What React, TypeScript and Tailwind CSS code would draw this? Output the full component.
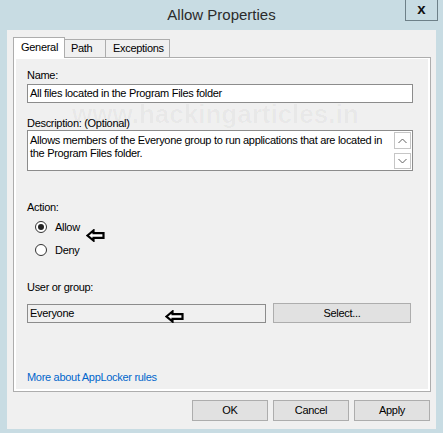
import React from "react";

const font = { fontFamily: '"Liberation Sans", Arial, sans-serif' };

function LeftArrow() {
  return (
    <svg width="19" height="13" viewBox="0 0 19 13">
      <polygon
        points="1.5,6.5 7.5,1.5 7.5,4.2 17.5,4.2 17.5,8.8 7.5,8.8 7.5,11.5"
        fill="#ffffff"
        stroke="#000000"
        strokeWidth="2.2"
        strokeLinejoin="miter"
      />
    </svg>
  );
}

function Chevron({ up }: { up?: boolean }) {
  return (
    <svg width="9" height="6" viewBox="0 0 9 6">
      <polyline
        points={up ? "0.5,5 4.5,1 8.5,5" : "0.5,1 4.5,5 8.5,1"}
        fill="none"
        stroke="#606060"
        strokeWidth="1"
      />
    </svg>
  );
}

function Radio({ checked }: { checked?: boolean }) {
  return (
    <div className="w-[12px] h-[12px] rounded-full border border-[#333333] bg-white flex items-center justify-center">
      {checked && <div className="w-[6px] h-[6px] rounded-full bg-[#222222]" />}
    </div>
  );
}

export default function App() {
  return (
    <div
      className="w-[443px] h-[433px] bg-[#c8dce3] relative overflow-hidden text-[11px] leading-[13px] tracking-[-0.3px] text-black"
      style={font}
    >
      {/* Title bar */}
      <div className="h-[30px] flex items-center justify-center relative">
        <span className="text-[15px] leading-[18px] tracking-normal text-[#2b2b2b] -mt-[1px]">Allow Properties</span>
        <div className="absolute right-[5px] top-0 w-[33px] h-[21px] border border-t-0 border-[#6e8088] flex items-center justify-center">
          <span className="text-[15px] font-bold leading-[14px] tracking-normal text-[#111111] -mt-[2px]">x</span>
        </div>
      </div>

      {/* Body */}
      <div className="mx-[7px] h-[399px] bg-[#f0f0f0] pl-[6px] pr-[6px] pt-[7px] flex flex-col">
        {/* Tabs */}
        <div className="flex items-end h-[20px] relative z-10">
          <div className="w-[52px] h-[21px] -mb-[1px] bg-white border border-b-0 border-[#adadad] flex items-start pl-[7px] pt-[3px]">
            General
          </div>
          <div className="w-[42px] h-[18px] -ml-[1px] bg-[#f0f0f0] border border-b-0 border-[#adadad] flex items-start pl-[6px] pt-[2px]">
            Path
          </div>
          <div className="w-[65px] h-[18px] -ml-[1px] bg-[#f0f0f0] border border-b-0 border-[#adadad] flex items-start pl-[7px] pt-[2px]">
            Exceptions
          </div>
        </div>

        {/* Panel */}
        <div className="w-[418px] h-[335px] border border-[#adadad] bg-white px-[2px] pb-[2px] pt-[1px]">
          <div className="h-full bg-[#f0f0f0] pl-[11px] flex flex-col relative">
            <div className="mt-[10px]">Name:</div>
            <div className="mt-[2px] w-[386px] h-[19px] border border-[#8c8c8c] bg-white pl-[2px] flex items-center">
              All files located in the Program Files folder
            </div>
            <div className="mt-[14px]">Description: (Optional)</div>
            <div className="w-[386px] h-[41px] border border-[#8c8c8c] bg-white flex">
              <div className="flex-1 pl-[2px] pt-[3px] whitespace-nowrap">
                Allows members of the Everyone group to run applications that are located in
                <br />
                the Program Files folder.
              </div>
              <div className="w-[18px] flex flex-col pt-[1px] pr-[1px] pb-[1px]">
                <div className="h-[17px] border border-[#c6c6c6] flex items-center justify-center">
                  <Chevron up />
                </div>
                <div className="flex-1" />
                <div className="h-[16px] border border-[#c6c6c6] flex items-center justify-center">
                  <Chevron />
                </div>
              </div>
            </div>

            <div className="mt-[30px]">Action:</div>
            <div className="mt-[5px] h-[16px] flex items-center pl-[8px] relative">
              <Radio checked />
              <span className="ml-[8px]">Allow</span>
              <div className="absolute left-[59px] top-[10px]">
                <LeftArrow />
              </div>
            </div>
            <div className="mt-[7px] h-[16px] flex items-center pl-[8px]">
              <Radio />
              <span className="ml-[8px]">Deny</span>
            </div>

            <div className="mt-[23px]">User or group:</div>
            <div className="mt-[9px] flex items-start">
              <div className="mt-[1px] w-[239px] h-[19px] border border-[#8c8c8c] bg-[#f0f0f0] pl-[2px] flex items-center relative">
                Everyone
                <div className="absolute left-[137px] top-[5px]">
                  <LeftArrow />
                </div>
              </div>
              <div className="ml-[7px] w-[138px] h-[20px] border border-[#adadad] bg-[#e1e1e1] flex items-center justify-center">
                Select...
              </div>
            </div>

            <div className="mt-[48px] text-[#0066cc]">More about AppLocker rules</div>

            <div
              className="absolute left-[56px] top-[42px] text-[26px] leading-[26px] font-bold tracking-normal text-black/[0.035] pointer-events-none whitespace-nowrap"
            >
              www.hackingarticles.in
            </div>
          </div>
        </div>

        {/* Buttons */}
        <div className="mt-[8px] flex justify-end gap-[5px]">
          <div className="w-[76px] h-[21px] border border-[#adadad] bg-[#e1e1e1] flex items-center justify-center">OK</div>
          <div className="w-[76px] h-[21px] border border-[#adadad] bg-[#e1e1e1] flex items-center justify-center">Cancel</div>
          <div className="w-[76px] h-[21px] border border-[#adadad] bg-[#e1e1e1] flex items-center justify-center">Apply</div>
        </div>
      </div>
    </div>
  );
}
